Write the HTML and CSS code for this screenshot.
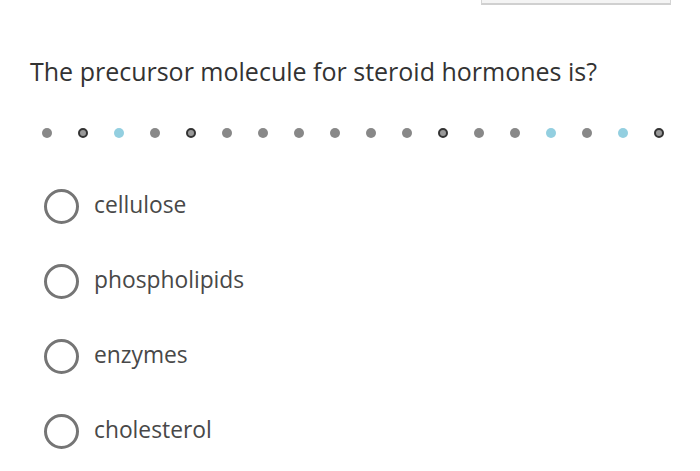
FILE: index.html
```html
<!DOCTYPE html>
<html>
<head>
<meta charset="utf-8">
<link rel="stylesheet" href="styles.css">
</head>
<body>
<div class="topbar"><div class="tab"></div></div>
<h1 class="question">The precursor molecule for steroid hormones is?</h1>
<div class="dots">
  <span class="dot"></span>
  <span class="dot ring"></span>
  <span class="dot blue"></span>
  <span class="dot"></span>
  <span class="dot ring"></span>
  <span class="dot"></span>
  <span class="dot"></span>
  <span class="dot"></span>
  <span class="dot"></span>
  <span class="dot"></span>
  <span class="dot"></span>
  <span class="dot ring"></span>
  <span class="dot"></span>
  <span class="dot"></span>
  <span class="dot blue"></span>
  <span class="dot"></span>
  <span class="dot blue"></span>
  <span class="dot ring"></span>
</div>
<ul class="options">
  <li class="option"><span class="radio"></span><span class="label">cellulose</span></li>
  <li class="option"><span class="radio"></span><span class="label">phospholipids</span></li>
  <li class="option"><span class="radio"></span><span class="label">enzymes</span></li>
  <li class="option"><span class="radio"></span><span class="label">cholesterol</span></li>
</ul>
</body>
</html>
```

FILE: styles.css
```css
html, body {
  margin: 0;
  padding: 0;
  background: #fff;
}
body {
  font-family: "Open Sans", "Liberation Sans", sans-serif;
  width: 700px;
  height: 471px;
  overflow: hidden;
}
.topbar {
  display: flex;
  justify-content: flex-end;
  padding-right: 29px;
}
.tab {
  width: 188px;
  height: 3px;
  border: 1px solid #d4d4d4;
  border-top: none;
  border-bottom: 2px solid #d0d0d0;
  background: #f4f4f4;
}
.question {
  margin: 49px 0 0 30px;
  font-size: 25px;
  font-weight: 400;
  color: #333;
  line-height: 34px;
  letter-spacing: 0;
}
.dots {
  display: flex;
  gap: 26px;
  margin: 40px 0 0 42px;
  height: 10px;
}
.dot {
  width: 10px;
  height: 10px;
  border-radius: 50%;
  background: #888;
  box-sizing: border-box;
  flex: none;
}
.dot.ring {
  border: 2px solid #333;
  background: #999;
}
.dot.blue {
  background: #93cfe0;
}
.options {
  list-style: none;
  margin: 51px 0 0 0;
  padding: 0 0 0 44px;
  display: flex;
  flex-direction: column;
  gap: 40px;
}
.option {
  display: flex;
  align-items: center;
  height: 35px;
}
.radio {
  width: 35px;
  height: 35px;
  box-sizing: border-box;
  border: 3px solid #757575;
  border-radius: 50%;
  flex: none;
}
.label {
  margin-left: 15px;
  font-size: 22.8px;
  color: #484848;
  position: relative;
  top: -2px;
}
```
